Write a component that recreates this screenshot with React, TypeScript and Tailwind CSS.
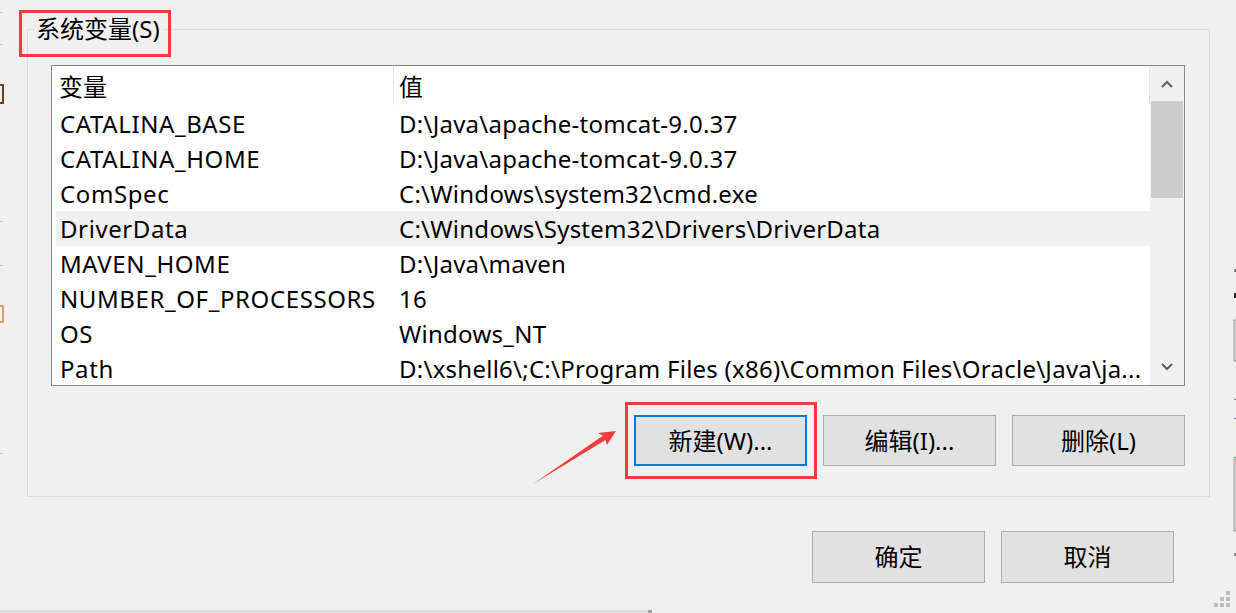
import React from "react";

const rows: [string, string][] = [
  ["CATALINA_BASE", "D:\\Java\\apache-tomcat-9.0.37"],
  ["CATALINA_HOME", "D:\\Java\\apache-tomcat-9.0.37"],
  ["ComSpec", "C:\\Windows\\system32\\cmd.exe"],
  ["DriverData", "C:\\Windows\\System32\\Drivers\\DriverData"],
  ["MAVEN_HOME", "D:\\Java\\maven"],
  ["NUMBER_OF_PROCESSORS", "16"],
  ["OS", "Windows_NT"],
  ["Path", "D:\\xshell6\\;C:\\Program Files (x86)\\Common Files\\Oracle\\Java\\ja..."],
];

function Btn({ label, focused }: { label: string; focused?: boolean }) {
  return (
    <div
      className={
        focused
          ? "w-[173px] h-[51px] bg-[#e1e1e1] border-2 border-[#0078d7] flex items-center justify-center"
          : "w-[173px] h-[51px] bg-[#e1e1e1] border border-[#adadad] flex items-center justify-center"
      }
    >
      {label}
    </div>
  );
}

function Chevron({ up }: { up?: boolean }) {
  return (
    <svg width="14" height="10" viewBox="0 0 14 10">
      <polyline
        points={up ? "2,8 7,3 12,8" : "2,2 7,7 12,2"}
        fill="none"
        stroke="#606060"
        strokeWidth="2"
      />
    </svg>
  );
}

export default function App() {
  return (
    <div className="relative w-[1236px] h-[613px] overflow-hidden bg-[#f0f0f0] text-black text-[24px] font-['Noto_Sans','Noto_Sans_CJK_SC',sans-serif] flex flex-col">
      {/* group box */}
      <div className="relative ml-[27px] mt-[29px] w-[1183px] h-[468px] shrink-0 border border-[#dcdcdc] pt-[35px] pl-[23px] pr-[24px] flex flex-col">
        <div className="absolute left-[5px] top-[-16px] px-[3px] bg-[#f0f0f0] leading-[30px]">
          系统变量(S)
          <div className="absolute left-[-14px] top-[-4px] w-[152px] h-[47px] border-[3px] border-[#f03c3c]" />
        </div>

        {/* list box */}
        <div className="w-[1134px] h-[321px] border border-[#828790] bg-white flex overflow-hidden">
          <div className="flex-1 flex flex-col overflow-hidden">
            <div className="h-[40px] shrink-0 flex items-stretch">
              <div className="w-[341px] pl-[7px] flex items-center pt-[2px]">
                <span>变量</span>
              </div>
              <div className="w-px my-[1px] bg-[#e5e5e5]" />
              <div className="flex-1 pl-[5px] flex items-center pt-[2px]">值</div>
              <div className="w-px my-[1px] bg-[#e5e5e5]" />
            </div>
            {rows.map(([k, v]) => (
              <div
                key={k}
                className={
                  k === "DriverData"
                    ? "ml-[4px] h-[35px] shrink-0 flex items-center bg-[#f0f0f0]"
                    : "ml-[4px] h-[35px] shrink-0 flex items-center"
                }
              >
                <div className="w-[336px] pl-[4px] whitespace-nowrap tracking-[0.6px]">{k}</div>
                <div className="flex-1 pl-[7px] whitespace-nowrap overflow-hidden tracking-[0.25px]">{v}</div>
              </div>
            ))}
          </div>
          <div className="w-[34px] shrink-0 bg-[#f0f0f0] flex flex-col items-center">
            <div className="h-[35px] w-full flex items-center justify-center">
              <Chevron up />
            </div>
            <div className="w-[32px] h-[97px] bg-[#cdcdcd]" />
            <div className="flex-1" />
            <div className="h-[36px] w-full flex items-center justify-center">
              <Chevron />
            </div>
          </div>
        </div>

        {/* buttons */}
        <div className="mt-[29px] flex justify-end gap-[16px]">
          <div className="relative">
            <Btn label="新建(W)..." focused />
            <div className="absolute left-[-9px] top-[-13px] right-[-10px] bottom-[-13px] border-[3px] border-[#f03c3c]" />
          </div>
          <Btn label="编辑(I)..." />
          <Btn label="删除(L)" />
        </div>
      </div>

      {/* dialog buttons */}
      <div className="mt-[34px] pr-[62px] flex justify-end gap-[16px]">
        <div className="w-[173px] h-[52px] bg-[#e1e1e1] border border-[#adadad] flex items-center justify-center">确定</div>
        <div className="w-[173px] h-[52px] bg-[#e1e1e1] border border-[#adadad] flex items-center justify-center">取消</div>
      </div>

      {/* bottom edge of window behind */}
      <div className="mt-auto h-[3px] flex">
        <div className="w-[648px] bg-[#dcdcdc]" />
        <div className="w-[4px] bg-[#a0a0a0]" />
      </div>

      {/* annotation arrow */}
      <svg className="absolute left-0 top-0 pointer-events-none" width="1236" height="613" viewBox="0 0 1236 613">
        <polygon points="533,484 605.5,440 607,445 616,431 598,433 602.9,435.8" fill="#f03c3c" />
        {/* left edge artifacts of windows behind */}
        <g fill="#c8c8c8">
          <rect x="0" y="12" width="3" height="1" />
          <rect x="0" y="44" width="3" height="1" />
          <rect x="0" y="221" width="3" height="1" />
          <rect x="0" y="265" width="3" height="1" />
          <rect x="0" y="453" width="3" height="1" />
        </g>
        <path d="M0,85 H3 V103 H0" fill="none" stroke="#6a4020" strokeWidth="2" />
        <path d="M0,306 H3 V322 H0" fill="none" stroke="#d8a070" strokeWidth="2" />
        {/* right edge artifacts */}
        <rect x="1234" y="269" width="2" height="3" fill="#909090" />
        <rect x="1234" y="293" width="2" height="5" fill="#202020" />
        <rect x="1234" y="320" width="2" height="41" fill="#e4e4e4" stroke="#a0a0a0" strokeWidth="1" />
        <rect x="1234" y="399" width="2" height="1" fill="#909090" />
        <rect x="1234" y="418" width="2" height="1" fill="#4a90d0" />
        <rect x="1234" y="457" width="2" height="1" fill="#4a90d0" />
        <rect x="1234" y="459" width="2" height="72" fill="#e4e4e4" stroke="#a0a0a0" strokeWidth="1" />
        <rect x="1234" y="553" width="2" height="3" fill="#909090" />
        {/* resize grip */}
        <g fill="#bcbcbc">
          <rect x="1226" y="591" width="4" height="4" />
          <rect x="1220" y="597" width="4" height="4" />
          <rect x="1226" y="597" width="4" height="4" />
          <rect x="1214" y="603" width="4" height="4" />
          <rect x="1220" y="603" width="4" height="4" />
          <rect x="1226" y="603" width="4" height="4" />
        </g>
      </svg>
    </div>
  );
}
